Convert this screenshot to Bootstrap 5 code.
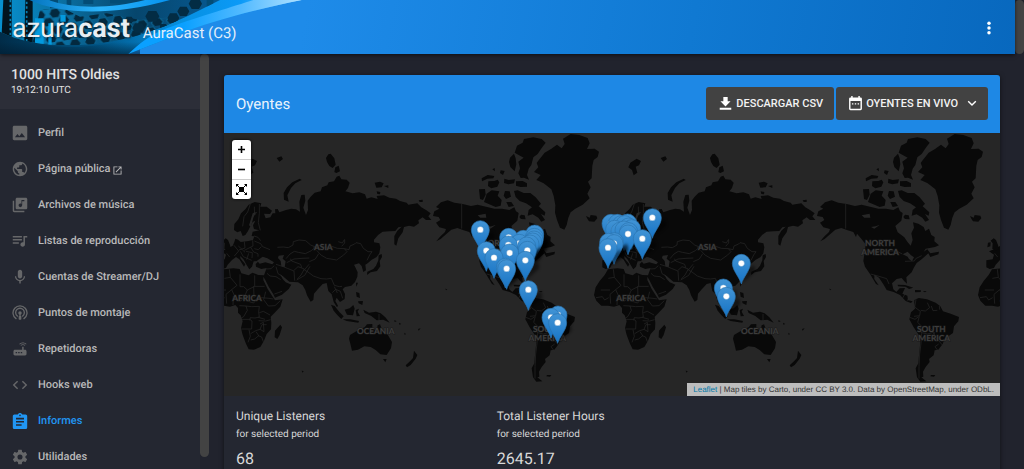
<!DOCTYPE html>
<html lang="es" data-bs-theme="dark">
<head>
<meta charset="utf-8">
<meta name="viewport" content="width=device-width, initial-scale=1">
<title>AzuraCast - Oyentes</title>
<link href="https://cdn.jsdelivr.net/npm/bootstrap@5.3.0/dist/css/bootstrap.min.css" rel="stylesheet">
<style>
body{font-family:Roboto,"Liberation Sans",sans-serif;font-size:12px;background:#21232d;color:#d8d8d8;text-rendering:geometricPrecision}
h1,h2,h3{color:inherit!important}
.topbar{height:54px;background:linear-gradient(100deg,#1e8be9 30%,#1079d2 68%,#0868be);box-shadow:0 1px 4px #0009;z-index:3;padding:0 14px 0 12px}
.topbar-art{position:absolute;inset:0 auto 0 0;width:340px;height:54px}
.brand{font-size:27px;line-height:36px;font-weight:400;color:#e8eef3;text-shadow:1px 1px 2px #0007;padding-top:2px}
.brand b{font-weight:700}
.instance{font-size:15px;line-height:20px;color:#e3effb;padding-top:11px;margin-left:13px}
.icon-btn{background:none;border:0;color:#fff;width:24px}
.page-track{width:9px;background:#21232d}
.thumb{background:#434343;border-radius:5px}
.sidebar{width:209px;background:#242731}
.station{background:#2c2e38;height:55px;padding:12px 12px 0 11px;color:#e2e2e2}
.station h1{font-size:14px;line-height:18px;font-weight:500;margin:0}
.station span{font-size:10px;line-height:14px;font-weight:400;display:block}
.side-nav{padding-top:6px}
.side-nav a{height:36px;padding:0 12px;gap:9px;color:#b9b9ba;font-size:11px;font-weight:500}
.side-nav svg{width:16px;height:16px;fill:#666769}
.side-nav a>svg:first-child{margin-right:1px}
.side-nav svg.ext{width:9px;height:9px;fill:#b9b9ba;margin-left:-6px;margin-top:3px}
.side-nav a.active,.side-nav a.active svg{color:#2196f3;fill:#2196f3}
.content{padding:21px 15px 0}
.panel{background:#242731;border:0;border-radius:3px;box-shadow:0 1px 5px #0008}
.panel-head{background:#1e88e5;border-radius:3px 3px 0 0;min-height:58px;padding:0 12px 1px;gap:2px}
.panel-head h2{font-size:15px;line-height:20px;font-weight:400;color:#e9f3fc!important;margin:0}
.btn-tool{background:#424242;color:#f3f3f3;height:33px;border-radius:3px;font-size:11px;font-weight:500;padding:0 10px 0 12px;line-height:16px;gap:4px}
.btn-tool:hover{background:#4c4c4c;color:#fff}
.btn-tool svg{width:13px;height:15px;fill:#fff}
.btn-tool svg.caret{width:10px;margin-left:5px}
.map{height:263px;background:#262626}
.map-canvas{width:100%;height:262px}
.map text{font-family:Lato,sans-serif;font-weight:700;font-size:25px;fill:#3d3d3d;stroke:#1a1a1a;stroke-width:3px;paint-order:stroke;text-anchor:middle}
.map-tools{position:absolute;left:8px;top:7px;width:19px;border-radius:3px;box-shadow:0 0 3px #000;background:#fff}
.map-tools button{border:0;background:none;height:20px;padding:0;border-bottom:1px solid #ccc}
.map-tools button:last-child{border:0;height:19px}
.credit{position:absolute;right:0;bottom:0;background:#bdbdbd;color:#333;font:8px/13px "Liberation Sans",sans-serif;padding:0 6px}
.credit a{color:#0078a8;text-decoration:none}
.stats{padding:11px 12px}
.stats .row{--bs-gutter-x:30px}
.stats h3{font-size:12px;line-height:18px;font-weight:400;margin:0}
.stats small{font-size:10px;line-height:20px;display:block}
.stats strong{font-size:16px;line-height:28px;font-weight:400;display:block}
</style>
</head>
<body class="vh-100 overflow-hidden d-flex">
<div class="flex-grow-1 d-flex flex-column vh-100">
<header class="topbar position-relative d-flex align-items-center flex-shrink-0">
<svg class="topbar-art" viewBox="0 0 1020 162" aria-hidden="true">
<defs>
<linearGradient id="band"><stop offset="0" stop-color="#012c48"/><stop offset=".3" stop-color="#01517f"/><stop offset=".6" stop-color="#0690e0"/><stop offset=".8" stop-color="#0b9af8"/><stop offset="1" stop-color="#8bd0ff"/></linearGradient>
<linearGradient id="art"><stop offset="0" stop-color="#0790ce"/><stop offset=".3" stop-color="#0a6c9d"/><stop offset=".6" stop-color="#06466d"/><stop offset="1" stop-color="#075b95"/></linearGradient>
<linearGradient id="ribbon"><stop offset="0" stop-color="#0474be"/><stop offset=".5" stop-color="#2cb4fb"/><stop offset="1" stop-color="#0693f0"/></linearGradient>
<linearGradient id="glow" gradientUnits="userSpaceOnUse" x1="550" x2="900"><stop offset="0" stop-color="#0aa0ff"/><stop offset=".5" stop-color="#52baff"/><stop offset="1" stop-color="#aee0ff"/></linearGradient>
<linearGradient id="shade" x2="0" y2="1"><stop offset=".5" stop-color="#001c30" stop-opacity="0"/><stop offset="1" stop-color="#001c30" stop-opacity=".6"/></linearGradient>
<pattern id="hex" width="46" height="50" patternUnits="userSpaceOnUse" patternTransform="rotate(-9)"><g fill="#03293f"><path d="M10 1h17l9 14-9 14h-17l-9-14zM33 26h17l9 14-9 14h-17l-9-14zM-13 26h17l9 14-9 14h-17l-9-14z" stroke="#0a6593" stroke-width="3"/></g></pattern>
<clipPath id="artclip"><path d="M0 0H660C570 45 500 82 410 107C270 145 110 150 0 95Z"/></clipPath>
</defs>
<path d="M0 0H905C760 30 630 65 530 105C480 125 430 145 385 162H0Z" fill="url(#band)"/>
<path d="M0 90C120 160 300 150 420 105V162H0Z" fill="url(#shade)"/>
<path d="M500 85C610 45 700 20 760 0H905C760 30 630 65 530 105C480 125 430 145 385 162C420 130 450 105 500 85Z" fill="url(#glow)"/>
<g clip-path="url(#artclip)">
<rect width="680" height="162" fill="url(#art)"/>
<path d="M120 30L190 25L240 50L320 40L420 60L530 50L560 162H90Z" fill="url(#hex)"/>
<path d="M150 0h24v25h-24zM200 0h14v20h-14zM250 0h30v12h-30zM330 0h60v10h-60zM620 0h20v20h-20z" fill="#034c75"/>
<g fill="#032c44"><path d="M575 -5h22l9 16-9 16h-22l-9-16zM445 33h24l9 16-9 16h-24l-9-16zM510 40h20l8 14-8 14h-20l-8-14zM405 70h22l8 14-8 14h-22l-8-14zM540 20h20l8 14-8 14h-20l-8-14zM380 50h15l6 10-6 10h-15l-6-10zM480 72h18l6 10-6 10h-18z"/></g>
<path d="M10 0H35V162H2ZM76 0H98V162H72Z" fill="#02141e"/>
<path d="M80 5v140M31 0v162" stroke="#087db0" stroke-width="5" stroke-dasharray="7 7"/>
<path d="M105 55h26v80h-26zM145 70h10v90h-10zM181 45h16v20h-16z" fill="#039ade"/>
</g>
<path d="M88 0C180 42 330 50 510 0H435C340 25 220 28 145 0Z" fill="url(#ribbon)"/>
</svg>
<div class="brand position-relative">azura<b>cast</b></div>
<div class="instance position-relative me-auto">AuraCast (C3)</div>
<button class="icon-btn position-relative p-0" aria-label="Menú"><svg width="16" height="16" viewBox="0 0 24 24" fill="currentColor"><circle cx="12" cy="5" r="2.6"/><circle cx="12" cy="12" r="2.6"/><circle cx="12" cy="19" r="2.6"/></svg></button>
</header>
<div class="d-flex flex-grow-1 overflow-hidden">
<aside class="sidebar d-flex flex-shrink-0">
<div class="flex-grow-1">
<div class="station"><h1>1000 HITS Oldies</h1><span>19:12:10 UTC</span></div>
<nav class="side-nav nav flex-column flex-nowrap">
<a class="d-flex align-items-center text-decoration-none" href="#"><svg viewBox="1 1 22 22"><path d="M22 20V4c0-1.100-.9-2-2-2H4c-1.100 0-2 .9-2 2v16c0 1.100.9 2 2 2h16c1.100 0 2-.9 2-2zM8.500 13.500l2.500 3 3.500-4.500 4.500 6H5l3.500-4.500z"/></svg>Perfil</a>
<a class="d-flex align-items-center text-decoration-none" href="#"><svg viewBox="1 1 22 22"><path d="M12 2C6.480 2 2 6.480 2 12s4.480 10 10 10 10-4.480 10-10S17.520 2 12 2zm-1 17.930c-3.950-.49-7-3.850-7-7.930 0-.62.080-1.210.21-1.790L9 15v1c0 1.100.9 2 2 2v1.930zm6.900-2.540c-.26-.81-1-1.390-1.900-1.390h-1v-3c0-.55-.45-1-1-1H8v-2h2c.55 0 1-.45 1-1V7h2c1.100 0 2-.9 2-2v-.41c2.930 1.190 5 4.060 5 7.410 0 2.080-.8 3.970-2.100 5.390z"/></svg>Página pública <svg class="ext" viewBox="2 2 20 20"><path d="M19 19H5V5h7V3H3v18h18v-9h-2v7zM14 3v2h3.600L7.800 14.800l1.400 1.400L19 6.400V10h2V3h-7z"/></svg></a>
<a class="d-flex align-items-center text-decoration-none" href="#"><svg viewBox="1 1 22 22"><path d="M20 2H8c-1.100 0-2 .9-2 2v12c0 1.100.9 2 2 2h12c1.100 0 2-.9 2-2V4c0-1.100-.9-2-2-2zm-2 5h-3v5.500a2.500 2.500 0 1 1-2.500-2.500c.57 0 1.080.19 1.500.51V5h4v2zM4 6H2v14c0 1.100.9 2 2 2h14v-2H4V6z"/></svg>Archivos de música</a>
<a class="d-flex align-items-center text-decoration-none" href="#"><svg viewBox="2 2 21 21"><path d="M15 6H3v2h12V6zm0 4H3v2h12v-2zM3 16h8v-2H3v2zM17 6v8.180c-.31-.11-.65-.18-1-.18-1.660 0-3 1.340-3 3s1.340 3 3 3 3-1.340 3-3V8h3V6h-5z"/></svg>Listas de reproducción</a>
<a class="d-flex align-items-center text-decoration-none" href="#"><svg viewBox="1 1 22 22"><path d="M12 14c1.660 0 3-1.340 3-3V5c0-1.660-1.340-3-3-3S9 3.340 9 5v6c0 1.660 1.340 3 3 3zm5.300-3c0 3-2.540 5.100-5.300 5.100S6.700 14 6.700 11H5c0 3.410 2.720 6.230 6 6.720V21h2v-3.280c3.280-.48 6-3.300 6-6.720h-1.700z"/></svg>Cuentas de Streamer/DJ</a>
<a class="d-flex align-items-center text-decoration-none" href="#"><svg viewBox="0 0 24 24"><g fill="none" stroke="#666769" stroke-width="2" stroke-linecap="round"><path d="M6 20.500A10.500 10.500 0 1 1 18 20.500M8 16.500A6.500 6.500 0 1 1 16 16.500M12 14v7M11 17v4M13 17v4"/></g><circle cx="12" cy="12" r="2.600"/></svg>Puntos de montaje</a>
<a class="d-flex align-items-center text-decoration-none" href="#"><svg viewBox="1 1 22 22"><path d="M20.200 5.900l.8-.8C19.600 3.700 17.800 3 16 3s-3.600.7-5 2.100l.8.8C13 4.800 14.500 4.200 16 4.200s3 .6 4.200 1.700zm-.9.800c-.9-.9-2.100-1.400-3.300-1.400s-2.400.5-3.300 1.400l.8.800c.7-.7 1.600-1 2.500-1s1.800.3 2.500 1l.8-.8zM19 13h-2V9h-2v4H5c-1.100 0-2 .9-2 2v4c0 1.100.9 2 2 2h14c1.100 0 2-.9 2-2v-4c0-1.100-.9-2-2-2zM8 18H6v-2h2v2zm3.500 0h-2v-2h2v2zm3.500 0h-2v-2h2v2z"/></svg>Repetidoras</a>
<a class="d-flex align-items-center text-decoration-none" href="#"><svg viewBox="1 1 22 22"><path d="M9.400 16.600L4.800 12l4.600-4.600L8 6l-6 6 6 6 1.400-1.400zm5.200 0l4.600-4.600-4.600-4.600L16 6l6 6-6 6-1.400-1.400z"/></svg>Hooks web</a>
<a class="d-flex align-items-center text-decoration-none active" href="#" aria-current="page"><svg viewBox="2 1 20 20"><path d="M19 3h-4.180C14.400 1.840 13.300 1 12 1s-2.400.84-2.820 2H5c-1.100 0-2 .9-2 2v14c0 1.100.9 2 2 2h14c1.100 0 2-.9 2-2V5c0-1.100-.9-2-2-2zm-7 0c.55 0 1 .45 1 1s-.45 1-1 1-1-.45-1-1 .45-1 1-1zm2 14H7v-2h7v2zm3-4H7v-2h10v2zm0-4H7V7h10v2z"/></svg>Informes</a>
<a class="d-flex align-items-center text-decoration-none" href="#"><svg viewBox="1 1 22 22"><path d="M19.430 12.980c.04-.32.070-.64.070-.98s-.03-.66-.07-.98l2.110-1.650c.19-.15.24-.42.120-.64l-2-3.460c-.12-.22-.39-.3-.61-.22l-2.490 1c-.52-.4-1.080-.73-1.690-.98l-.38-2.650A.49.490 0 0 0 14 2h-4c-.25 0-.46.180-.49.420l-.38 2.650c-.61.250-1.170.59-1.690.98l-2.490-1c-.23-.09-.49 0-.61.22l-2 3.460c-.13.220-.07.490.12.640l2.110 1.650c-.04.320-.07.650-.07.980s.03.660.07.980l-2.110 1.650c-.19.150-.24.420-.12.640l2 3.460c.12.220.39.300.61.220l2.490-1c.52.400 1.080.73 1.690.98l.38 2.650c.03.240.24.420.49.420h4c.25 0 .46-.18.490-.42l.38-2.650c.61-.25 1.170-.59 1.690-.98l2.490 1c.23.090.49 0 .61-.22l2-3.460c.12-.22.070-.49-.12-.64l-2.110-1.650zM12 15.500a3.500 3.500 0 1 1 0-7 3.500 3.500 0 0 1 0 7z"/></svg>Utilidades</a>
</nav>
</div>
<div class="page-track"><div class="thumb h-100" style="max-height:97%"></div></div>
</aside>
<main class="content flex-grow-1 overflow-hidden">
<section class="panel card">
<div class="panel-head d-flex align-items-center">
<h2 class="me-auto">Oyentes</h2>
<button class="btn btn-tool d-flex align-items-center"><svg viewBox="3 3 18 18"><path d="M19 9h-4V3H9v6H5l7 7 7-7zM4 18v2.500h16V18z"/></svg>DESCARGAR CSV</button>
<button class="btn btn-tool d-flex align-items-center"><svg viewBox="3 1 18 21"><path fill-rule="evenodd" d="M5 3h1V1h2v2h8V1h2v2h1q2 0 2 2v14q0 2-2 2H5q-2 0-2-2V5q0-2 2-2zM5 8v11h14V8zM7 11h2v2H7zM11 11h2v2h-2zM15 11h2v2h-2z"/></svg>OYENTES EN VIVO<svg class="caret" viewBox="5 2 14 20"><path d="M7.400 8L12 12.600 16.600 8 18 9.500l-6 6-6-6z"/></svg></button>
</div>
<div class="map position-relative overflow-hidden">
<svg class="map-canvas d-block" viewBox="12 9 2328 786" preserveAspectRatio="xMinYMin slice" role="img" aria-label="Mapa de oyentes">
<defs>
<linearGradient id="pinfill" x2="0" y2="1"><stop offset="0" stop-color="#4294d5"/><stop offset="1" stop-color="#1673c5"/></linearGradient>
<filter id="blur" x="-50%" y="-50%" width="200%" height="200%"><feGaussianBlur stdDeviation="5"/></filter>
<g id="pin"><path d="M0 62L42 24L38 5L20 15Z" fill="#000" opacity=".45" filter="url(#blur)"/><path d="M0 62C-5 42-27 22-27 0A27 27 0 0 1 27 0C27 22 5 42 0 62Z" fill="url(#pinfill)" stroke="#2b74b0" stroke-width="2"/><circle r="9.500" fill="#fff" stroke="#2c76b5" stroke-width="1"/></g>
<g id="world">
<g fill="#090909">
<path d="M42 300L43 282L55 268L63 250L76 238L86 224L104 216L124 220L121 230L140 230L156 242L150 252L132 251L137 265L151 262L158 250L166 250L165 238L173 237L178 247L198 240L214 236L228 238L240 245L238 215L244 195L254 194L256 212L250 233L258 255L264 240L263 212L272 200L284 188L302 184L306 172L322 166L326 157L342 154L350 140L358 137L364 148L380 149L389 158L384 174L376 184L398 190L418 187L435 193L440 206L454 202L473 207L470 198L492 196L508 203L528 206L540 213L560 218L565 224L592 220L604 232L618 240L632 250L625 259L634 270L618 270L608 262L595 271L597 280L582 290L567 287L552 291L548 307L535 325L529 347L523 343L523 318L532 302L545 290L535 292L526 303L508 304L488 305L475 314L462 329L462 337L478 340L481 352L478 370L469 382L455 389L443 400L436 404L438 421L430 426L425 408L417 400L402 404L407 414L413 427L412 440L405 456L394 467L375 471L368 478L375 492L374 507L360 516L350 503L346 513L354 527L351 532L341 516L335 493L325 483L320 459L308 462L292 479L282 491L280 510L272 515L261 496L256 480L248 466L234 457L208 455L195 444L180 432L188 447L197 457L204 460L214 464L206 477L186 494L165 503L160 493L146 470L136 450L130 440L130 450L143 477L158 500L165 511L188 508L181 530L164 548L152 560L154 578L153 598L140 612L132 632L121 651L102 659L86 658L78 641L68 615L63 595L68 574L62 556L54 548L54 534L46 525L30 530L12 527L-8 527L-23 512L-30 495L-25 472L-13 453L2 435L12 418L40 415L59 417L64 430L86 436L97 428L115 435L132 436L140 414L124 417L108 410L107 402L116 393L101 394L96 410L88 418L80 405L70 387L60 378L62 386L76 403L72 410L58 388L48 381L36 390L23 404L18 414L5 417L-5 412L-5 391L14 388L18 374L3 364L22 356L38 347L43 336L46 326L54 329L62 336L86 333L99 330L103 319L95 318L98 305L118 301L102 297L99 286L106 272L98 276L91 289L84 303L76 315L68 318L62 303L52 307Z"/>
<path d="M332 71L343 85L347 104L338 114L328 108L321 96L318 84L325 73ZM346 112L356 107L360 124L349 129L343 126ZM464 158L480 155L491 160L485 172L469 173ZM492 168L505 166V174ZM470 184L481 186L480 193L472 192ZM596 211L608 209V216L599 216ZM192 209L191 189L201 172L217 157L239 146L245 150L226 160L213 174L202 196L206 215ZM79 98L98 86L111 93L105 106L95 110L100 128L89 136L84 120L73 112ZM170 84L184 79L189 87L178 95ZM13 356L14 340L8 332L17 325L24 330L30 345L33 357L23 363ZM0 338L8 337L7 349L-2 352Z"/>
<path d="M476 376L485 372L486 381L479 393L481 409L471 423L452 427L441 435L442 425L460 417L468 407L475 391ZM408 458L414 458L409 470ZM408 486L418 489L420 504L410 500ZM414 514L429 513L427 525L416 520ZM333 524L344 528L358 546L371 559L364 567L352 555L341 542ZM368 568L391 568L417 573L415 578L380 573ZM374 539L389 535L400 525L404 536L399 556L381 554ZM407 540L417 536L413 545L420 558L410 559ZM430 539L447 548L468 545L482 550L496 562L509 578L490 569L470 571L454 558L434 549Z"/>
<path d="M390 615L409 604L423 596L434 592L441 583L457 582L457 597L470 601L473 586L480 583L488 604L504 616L516 636L513 655L500 675L481 673L467 660L452 651L433 649L414 659L396 662L391 641L387 626ZM489 687L500 687L496 697ZM582 662L592 675L587 686L572 705L561 712L557 706L570 694L579 684ZM181 584L186 592L179 615L172 627L164 622L165 602Z"/>
<path d="M245 722L251 723L248 728ZM523 570L530 574L524 576ZM537 578L544 582L538 584ZM553 608L558 612L554 615ZM594 597L602 595L596 602Z"/>
<g transform="translate(228)">
<path d="M415 244L430 236L420 231L435 217L455 211L475 218L500 222L525 228L545 224L570 230L595 236L618 236L640 240L655 232L660 244L668 249L664 272L646 288L653 307L673 322L682 335L692 347L698 330L694 310L702 293L699 277L715 281L731 291L736 303L747 296L754 315L764 321L763 334L777 346L765 351L737 356L731 365L742 358L751 370L777 365L775 373L751 381L745 370L725 388L710 399L701 414L695 427L679 442L681 461L673 454L665 444L650 447L636 460L640 478L649 486L659 475L675 474L667 491L682 497L684 511L698 514L693 519L677 513L660 495L641 486L620 480L610 463L597 443L583 434L583 447L596 466L588 462L570 432L555 410L550 393L555 360L557 343L545 328L531 311L528 321L520 306L503 301L484 294L466 299L451 312L434 327L421 334L432 320L447 306L450 297L430 292L420 278L433 270L428 261L411 258Z"/>
<path d="M703 510L716 504L741 508L767 518L781 529L789 544L812 551L837 561L835 574L822 589L819 609L794 626L788 642L775 659L764 661L761 676L747 687L749 696L737 711L729 725L730 740L724 742L739 754L721 755L711 742L707 715L715 700L717 676L721 638L717 616L701 592L688 568L693 547L705 536L703 520ZM753 735L766 735L762 740L751 739ZM653 464L675 465L700 473L687 477L677 470L654 469ZM705 480L723 481L722 486L705 487ZM728 484L740 483L735 487ZM448 476L454 478L450 481Z"/>
<path d="M728 91L746 68L765 57L783 44L797 55L806 42L801 26L824 12L850 15L875 24L881 40L873 57L896 56L909 65L905 81L893 90L889 107L887 145L876 155L884 172L874 191L881 205L860 224L838 236L824 247L817 263L812 285L805 299L792 293L783 270L777 248L778 226L773 198L766 178L743 160L730 154L721 150L734 135L714 126L727 112L722 99ZM656 68L663 47L680 38L684 27L712 22L737 27L749 38L737 54L725 72L712 82L706 105L698 116L693 135L699 149L684 143L674 144L667 130L672 115L667 95L683 83ZM642 83L654 71L659 85L661 103L656 124L643 111L639 96ZM575 135L595 138L592 145L574 146L558 154L557 145ZM589 118L596 114L597 124ZM614 121L626 123L621 135L612 129ZM577 154L595 153L605 149L610 157L604 170L586 175L576 168ZM625 146L638 150L657 148L654 160L637 163L624 159ZM660 154L680 153L693 160L693 170L674 171L660 167ZM549 178L567 177L569 194L561 210L552 207ZM572 191L587 181L610 184L605 197L617 210L614 227L599 231L580 223L564 216L569 202ZM627 183L641 184L645 200L630 207L623 197ZM654 183L665 181L683 189L703 189L719 202L735 221L728 229L748 247L746 257L735 252L747 270L736 275L727 263L710 253L695 257L698 240L708 232L690 220L671 213L659 201ZM631 216L646 216L654 228L638 231ZM675 254L686 256L689 268L675 267L670 261ZM870 258L881 263L884 255L901 257L904 265L895 275L879 274L874 266Z"/>
</g>
</g>
<g fill="#262626"><path d="M111 392L128 380L142 385L162 397L157 403L136 397L119 401ZM176 377L192 375L188 386L197 394L194 412L184 409L182 393L174 384ZM773 256L797 251L799 263L781 263ZM801 291L815 289L828 284L811 296ZM896 373L911 365L921 376L930 382L924 394L915 387L911 380ZM98 250L108 245L100 263L93 290L87 286L93 266Z"/></g>
<g fill="none" stroke="#292929" stroke-width="2" stroke-linejoin="round">
<path d="M725 222V296M172 352L190 351L205 353L219 345L220 335L237 330L257 332L272 345L286 351L274 362L256 371L235 367L223 364L210 372L198 386M280 353L301 345L317 353L335 349L352 355L373 356L381 365L371 375L350 390L320 385L303 375L290 361M373 356L387 359L390 348L404 342L408 338L422 341L430 355L444 365L456 365L449 375L441 391M374 328L374 339L365 349M268 395L286 387L296 371M200 398L222 387L246 385L268 384M211 386L215 393L242 403L245 413M267 403L253 420L264 426L280 438L303 446L320 447L334 445L343 466L358 470L366 469M270 409L254 436L230 450M222 421L234 410L253 417L243 435L232 447M168 403L190 410L202 415L222 423L224 452M168 410L174 431L190 441M139 417L153 416L163 407M141 430L150 438L168 440L182 449M163 492L175 488L186 484M337 488L347 478L361 484L368 505M343 470L352 489M355 335L367 339L373 329"/>
<path d="M121 301L115 278L118 250L118 222M91 222L83 246L72 260L68 289M103 230L104 255L110 246M102 318L114 322L122 332M98 331L99 348L73 361M73 335L75 354L57 360M42 346L56 363L43 378M55 348L68 360L75 367M103 333L122 341L128 350L150 359M92 352L101 366L114 371L114 380M78 364L97 368L96 384M61 364L70 380L95 391M86 370L80 389M29 381L20 370M103 356L115 359L124 350"/>
<path d="M28 418L31 442L51 466L35 479L18 493M60 433L60 470M104 436V469H134M60 470H71L82 480L104 469M-10 480L18 480M13 445L31 442M35 479L48 507L63 513L76 494L82 480M-24 503L-5 500L2 510L14 503M18 493L20 521M40 498L39 525M76 494L78 512L101 519L112 504L124 503L147 505L160 507M101 469L102 504M137 485L131 509L145 528L165 527L181 512M58 527L78 528L82 541L71 560L64 564M78 528L95 530L118 529L116 546L118 561L105 564L91 563L89 571M118 548L130 544L150 555M116 572L137 573L152 569M115 562L135 568M63 568L89 568L96 573L95 597L64 597M87 599L91 619L84 637M92 611L107 602L120 598L126 584L140 584M92 630L104 627L116 617L108 605M114 617L125 621L130 635M120 582L130 577L132 605L120 598"/>
<path d="M784 363L877 363L895 372M903 394L931 393L935 386L953 377M800 432L825 439L848 446L855 462M895 506L905 488M910 512L914 505M936 508L932 531L949 544L947 557L930 559M970 518L977 533L964 543L950 541M982 528L987 542L1000 541M1006 528L1007 539M917 562L933 568L944 560M946 559L941 577L954 590L975 592L990 606L993 622L1004 632L1015 645M948 591L953 610L951 640L947 672L945 710L945 746M953 608L970 612L989 607M990 608L982 625L998 629M1004 642L993 650L1004 665M477 552V572"/>
</g>
<g><text x="310" y="360">ASIA</text><text x="81" y="514">AFRICA</text><text x="467" y="611">OCEANIA</text><text x="828" y="347">NORTH</text><text x="828" y="374">AMERICA</text><text x="982" y="606">SOUTH</text><text x="982" y="633">AMERICA</text></g>
</g>
</defs>
<use href="#world"/><use href="#world" x="1152"/><use href="#world" x="2304"/>
<g id="pins"></g>
</svg>
<div class="map-tools d-flex flex-column">
<button aria-label="Acercar"><svg class="d-block mx-auto" width="9" height="9" viewBox="0 0 9 9"><path d="M4.500 1v7M1 4.500h7" stroke="#000" stroke-width="1.600"/></svg></button>
<button aria-label="Alejar"><svg class="d-block mx-auto" width="9" height="9" viewBox="0 0 9 9"><path d="M1 4.500h7" stroke="#000" stroke-width="1.600"/></svg></button>
<button aria-label="Pantalla completa"><svg class="d-block mx-auto" width="11" height="11" viewBox="0 0 11 11"><path d="M1 1L10 10M10 1L1 10" stroke="#000"/><path d="M0 0h3L0 3zM11 0v3L8 0zM0 11V8l3 3zM11 11H8l3-3zM3 3h5v5H3z"/></svg></button>
</div>
<div class="credit"><a href="#">Leaflet</a> | Map tiles by Carto, under CC BY 3.0. Data by OpenStreetMap, under ODbL.</div>
</div>
<div class="stats"><div class="row">
<div class="col-4"><h3>Unique Listeners</h3><small>for selected period</small><strong>68</strong></div>
<div class="col-4"><h3>Total Listener Hours</h3><small>for selected period</small><strong>2645.17</strong></div>
</div></div>
</section>
</main>
</div>
</div>
<div class="page-track flex-shrink-0"><div class="thumb" style="height:54px"></div></div>
<script src="https://cdn.jsdelivr.net/npm/bootstrap@5.3.0/dist/js/bootstrap.bundle.min.js"></script>
<script>
// Listener positions on the map canvas, north to south so nearer pins overlap
const listeners=[[781,299],[944,312],[910,328],[943,322],[866,322],[942,330],[938,336],[898,340],[930,342],[865,345],[920,348],[799,362],[922,361],[869,369],[822,383],[916,391],[856,412],[860,416],[925,479],[1014,555],[993,562],[1013,578],
[1297,263],[1173,280],[1192,280],[1223,279],[1204,284],[1214,284],[1226,291],[1184,298],[1235,296],[1200,304],[1212,300],[1226,305],[1224,312],[1267,326],[1183,335],[1166,337],[1182,341],[1164,353],[1564,400],[1510,474],[1519,499]];
document.getElementById('pins').innerHTML=listeners.map(([x,y])=>`<use href="#pin" x="${x}" y="${y}"/>`).join('');
</script>
</body>
</html>
